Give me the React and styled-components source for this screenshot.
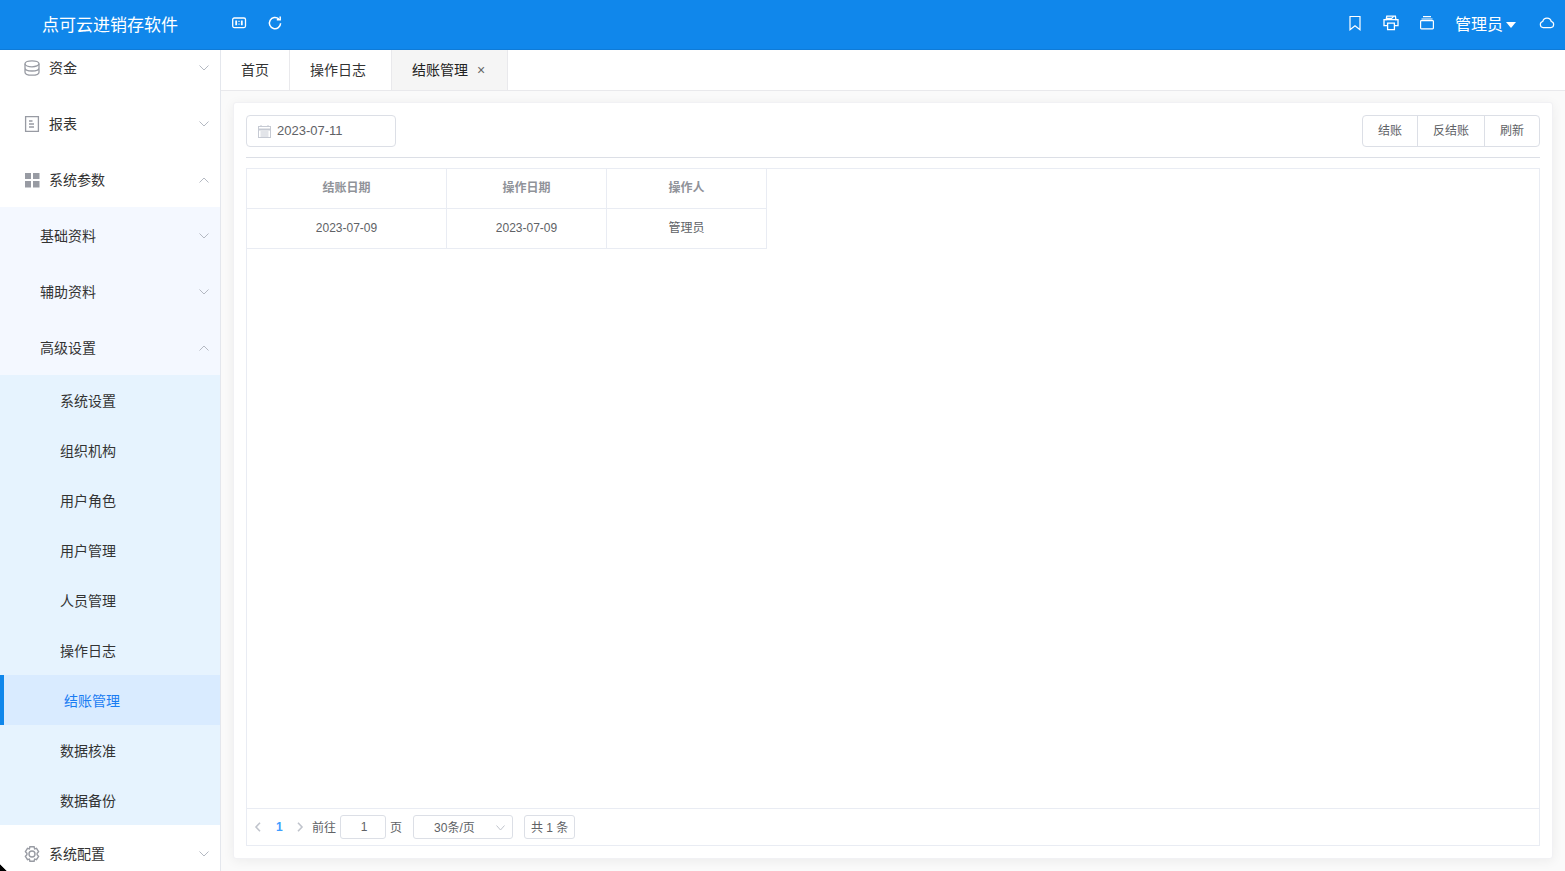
import React from 'react';
import styled, { createGlobalStyle } from 'styled-components';

const Global = createGlobalStyle`
  html, body { margin: 0; padding: 0; height: 100%; overflow: hidden; background: #fff; }
  body { font-family: "Liberation Sans", "Noto Sans CJK SC", sans-serif; color: #333; }
  #root { height: 100%; }
  * { box-sizing: border-box; }
`;

const Page = styled.div`
  width: 1565px; height: 871px; display: flex; flex-direction: column; overflow: hidden; position: relative;
`;
const Header = styled.header`
  height: 50px; flex: none; background: #1087eb; border-bottom: 1px solid #0e7bd8; color: #fff; display: flex; align-items: center;
`;
const Logo = styled.div`
  width: 220px; padding-left: 42px; font-size: 17px; flex: none; margin-top: -3px;
`;
const HeaderTools = styled.div`
  display: flex; align-items: center; gap: 20px; padding-left: 11px; margin-top: -3px;
`;
const HeaderRight = styled.div`
  margin-left: auto; display: flex; align-items: center; margin-top: -3px; padding-right: 10px;
`;
const HeadIcon = styled.span`
  display: flex; width: 16px; height: 16px; margin-right: ${p => p.$gap ?? 20}px;
`;
const UserName = styled.span`
  font-size: 16px; line-height: 20px; margin: 3px 3px 0 0;
`;
const Caret = styled.span`
  width: 0; height: 0; border-left: 5px solid transparent; border-right: 5px solid transparent; border-top: 6px solid #fff; margin-right: 23px; margin-top: 3px;
`;
const Body = styled.div`
  flex: 1; display: flex; min-height: 0;
`;
const Side = styled.aside`
  width: 221px; flex: none; border-right: 1px solid #e4e7ed; overflow: hidden; background: #fff;
`;
const Menu = styled.div`
  margin-top: -11px;
`;
const Row = styled.div`
  height: 56px; display: flex; align-items: center; font-size: 14px; color: #333; position: relative;
  padding-left: ${p => p.$pad}px; background: ${p => p.$bg || 'transparent'};
`;
const SubRow = styled.div`
  height: 50px; display: flex; align-items: center; font-size: 14px;
  padding-left: 60px;
  background: ${p => (p.$active ? '#d9ebff' : '#e6f3fe')};
  color: ${p => (p.$active ? '#1a7cf2' : '#333')};
  border-left: ${p => (p.$active ? '4px solid #1087eb' : 'none')};
`;
const RowIcon = styled.span`
  display: flex; width: 16px; height: 16px; margin: 1px 9px 0 0; color: #989ba3;
`;
const Chevron = styled.svg`
  position: absolute; right: 11px; top: 50%; margin-top: -2px; width: 10px; height: 6px; fill: none; stroke: #b4b9c2; stroke-width: 1;
`;
const Main = styled.main`
  flex: 1; min-width: 0; display: flex; flex-direction: column; background: #fafafa;
`;
const Tabs = styled.div`
  height: 41px; flex: none; background: #fff; display: flex; border-bottom: 1px solid #e9e9ec;
`;
const Tab = styled.div`
  height: 40px; display: flex; align-items: center; font-size: 14px; color: ${p => (p.$active ? '#222' : '#333')};
  padding: 0 ${p => p.$pr ?? 20}px 2px 20px; border-right: 1px solid #e9e9ec; background: ${p => (p.$active ? '#f5f5f5' : '#fff')};
`;
const Close = styled.span`
  font-size: 14px; color: #666; margin-left: 9px; line-height: 1; margin-top: 1px;
`;
const Card = styled.section`
  margin: 11px 12px 12px 12px; flex: 1; min-height: 0; background: #fff; border-radius: 3px; border: 1px solid #f1f1f4;
  box-shadow: 0 2px 12px rgba(0,0,0,.06); padding: 12px; display: flex; flex-direction: column;
`;
const Toolbar = styled.div`
  height: 43px; flex: none; display: flex; justify-content: space-between; align-items: flex-start; border-bottom: 1px solid #dcdfe6;
`;
const DateInput = styled.div`
  width: 150px; height: 32px; border: 1px solid #dcdfe6; border-radius: 4px; display: flex; align-items: center; padding-left: 11px; font-size: 13px; color: #606266;
`;
const DateText = styled.span`
  margin-left: 6px; font-size: 13px; padding-bottom: 2px;
`;
const BtnGroup = styled.div`
  display: flex; height: 32px; border: 1px solid #dcdfe6; border-radius: 4px;
`;
const Btn = styled.div`
  padding: 0 15px 3px; display: flex; align-items: center; font-size: 12px; color: #606266;
  & + & { border-left: 1px solid #dcdfe6; }
`;
const GridBox = styled.div`
  flex: 1; min-height: 0; margin-top: 10px; border: 1px solid #e9ecf3; display: flex; flex-direction: column;
`;
const TableArea = styled.div`
  flex: 1; min-height: 0;
`;
const TRow = styled.div`
  display: flex; height: 40px; width: 520px; border-bottom: 1px solid #e9ecf3;
`;
const Cell = styled.div`
  width: ${p => p.$w}px; display: flex; align-items: center; justify-content: center; font-size: 12px;
  padding-bottom: ${p => p.$pb}px;
  color: ${p => (p.$head ? '#909399' : '#606266')}; font-weight: ${p => (p.$head ? 700 : 400)};
  border-right: 1px solid #e9ecf3;
`;
const Pager = styled.div`
  height: 37px; flex: none; border-top: 1px solid #e9ecf3; display: flex; align-items: center; font-size: 12px; color: #606266;
`;
const PageArrow = styled.svg`
  width: 8px; height: 10px; fill: none; stroke: #c0c4cc; stroke-width: 1.6; margin-left: ${p => p.$ml}px;
`;
const PageNum = styled.span`
  color: #409eff; font-weight: 700; margin-left: 14px; width: 7px;
`;
const PageLabel = styled.span`
  margin-left: ${p => p.$ml}px; padding-bottom: 2px;
`;
const PageInput = styled.div`
  width: 46px; height: 24px; border: 1px solid #dcdfe6; border-radius: 3px; margin-left: 4px; display: flex; align-items: center; justify-content: center; padding-left: 2px;
`;
const PageSelect = styled.div`
  width: 100px; height: 24px; border: 1px solid #dcdfe6; border-radius: 3px; margin-left: 11px; display: flex; align-items: center; padding: 0 0 2px 20px; position: relative;
`;
const SelectChevron = styled.svg`
  position: absolute; right: 7px; top: 9px; width: 9px; height: 6px; fill: none; stroke: #c0c4cc; stroke-width: 1;
`;
const Total = styled.div`
  height: 24px; border: 1px solid #dcdfe6; border-radius: 3px; margin-left: 11px; padding: 0 5px 2px 6px; width: 51px; display: flex; align-items: center; white-space: nowrap;
`;
const Pointer = styled.svg`
  position: absolute; left: 0; bottom: 0; width: 9px; height: 8px;
`;

const Down = () => <Chevron viewBox="0 0 10 6"><path d="M.5.5 5 5 9.5.5" /></Chevron>;
const Up = () => <Chevron viewBox="0 0 10 6"><path d="M.5 5.5 5 1l4.5 4.5" /></Chevron>;

const stroke = { fill: 'none', stroke: 'currentColor', strokeWidth: 1.3 };

const DbIcon = () => <svg width="16" height="16" viewBox="0 0 16 16" {...stroke}><ellipse cx="8" cy="3.8" rx="7" ry="3" /><path d="M1 3.8v8.4c0 1.7 3.1 3 7 3s7-1.3 7-3V3.8M1 8c0 1.7 3.1 3 7 3s7-1.3 7-3" /></svg>;
const ReportIcon = () => <svg width="16" height="16" viewBox="0 0 16 16" {...stroke}><rect x="1.6" y=".6" width="12.8" height="14.8" /><path d="M5 5h3.5M5 8h5M5 11h5" /></svg>;
const GridIcon = () => <svg width="16" height="16" viewBox="0 0 16 16" fill="currentColor"><rect x="1" y="1" width="6" height="6" /><rect x="9" y="1" width="6.5" height="6" /><rect x="1" y="9" width="6" height="6.5" /><rect x="9" y="9" width="6.5" height="6.5" /></svg>;
const GearIcon = () => <svg width="16" height="16" viewBox="0 0 16 16" {...stroke} strokeWidth="1.4"><path d="M5.9.8h4.2l.5 2.1 1.9-.6 2.1 3.4-1.5 1.6v1.4l1.5 1.6-2.1 3.4-1.9-.6-.5 2.1H5.9l-.5-2.1-1.9.6-2.1-3.4L2.9 8.7V7.3L1.4 5.7l2.1-3.4 1.9.6z" /><circle cx="8" cy="8" r="3" /></svg>;
const CalIcon = () => <svg width="13" height="13" viewBox="0 0 13 13" fill="none" stroke="#c6cad3" strokeWidth="1" style={{ flex: 'none' }}><rect x=".5" y="1.5" width="12" height="11" /><path d="M.5 4.5h12" strokeWidth="2" /><path d="M3 0v2M10 0v2M2.5 7h8M2.5 9h8M2.5 11h8" /></svg>;

const ScreenIcon = () => <svg width="16" height="16" viewBox="0 0 16 16" fill="none" stroke="#fff" strokeWidth="1.3"><rect x="1.7" y="3" width="12.8" height="9.6" rx="1.5" /><path d="M5.2 5.4v4.8M10.8 5.4v4.8" strokeWidth="1.8" /><path d="M8 5.8v1.2M8 8.6v1.2" strokeWidth="1.2" /></svg>;
const RefreshIcon = () => <svg width="16" height="16" viewBox="0 0 16 16" fill="none" stroke="#fff" strokeWidth="1.5"><path d="M13.6 8.2a5.6 5.6 0 1 1-1.8-4.3" /><path d="M13.2 1.4v3.4H9.8" /></svg>;
const BookmarkIcon = () => <svg width="16" height="16" viewBox="0 0 16 16" fill="none" stroke="#fff" strokeWidth="1.2"><path d="M3 1.5h10v13.2L8 10.8l-5 3.9z" /></svg>;
const PrinterIcon = () => <svg width="16" height="16" viewBox="0 0 16 16" fill="none" stroke="#fff" strokeWidth="1.3"><path d="M3 5.5 3.8 1.2h8.6l.6 4.3M4.6 10.6H1V4.6h14v6h-3.6" /><path d="M4.6 8.2h6.8v6.4H4.6z" /><path d="M3.6 3.4h5l2-2" /></svg>;
const StackIcon = () => <svg width="16" height="16" viewBox="0 0 16 16" fill="none" stroke="#fff" strokeWidth="1.2"><path d="M4 1.6h8M2.5 4h11" /><rect x="1.6" y="5.6" width="12.8" height="8.3" rx=".8" /></svg>;
const CloudIcon = () => <svg width="16" height="16" viewBox="0 0 16 16" fill="none" stroke="#fff" strokeWidth="1.2"><path d="M4.2 12.6a3.1 3.1 0 0 1-.5-6.1 4.4 4.4 0 0 1 8.6 0 3.1 3.1 0 0 1-.5 6.1z" /></svg>;

const subItems = ['系统设置', '组织机构', '用户角色', '用户管理', '人员管理', '操作日志', '结账管理', '数据核准', '数据备份'];

export default function App() {
  return (
    <Page>
      <Global />
      <Header>
        <Logo>点可云进销存软件</Logo>
        <HeaderTools>
          <HeadIcon $gap={0}><ScreenIcon /></HeadIcon>
          <HeadIcon $gap={0}><RefreshIcon /></HeadIcon>
        </HeaderTools>
        <HeaderRight>
          <HeadIcon><BookmarkIcon /></HeadIcon>
          <HeadIcon><PrinterIcon /></HeadIcon>
          <HeadIcon><StackIcon /></HeadIcon>
          <UserName>管理员</UserName>
          <Caret />
          <HeadIcon $gap={0}><CloudIcon /></HeadIcon>
        </HeaderRight>
      </Header>
      <Body>
        <Side>
          <Menu>
            <Row $pad={24}><RowIcon><DbIcon /></RowIcon>资金<Down /></Row>
            <Row $pad={24}><RowIcon><ReportIcon /></RowIcon>报表<Down /></Row>
            <Row $pad={24}><RowIcon><GridIcon /></RowIcon>系统参数<Up /></Row>
            <Row $pad={40} $bg="#f4f8ff">基础资料<Down /></Row>
            <Row $pad={40} $bg="#f4f8ff">辅助资料<Down /></Row>
            <Row $pad={40} $bg="#f4f8ff">高级设置<Up /></Row>
            {subItems.map(s => <SubRow key={s} $active={s === '结账管理'}>{s}</SubRow>)}
            <Row $pad={24}><RowIcon><GearIcon /></RowIcon>系统配置<Down /></Row>
          </Menu>
        </Side>
        <Main>
          <Tabs>
            <Tab>首页</Tab>
            <Tab $pr={25}>操作日志</Tab>
            <Tab $active $pr={22}>结账管理<Close>×</Close></Tab>
          </Tabs>
          <Card>
            <Toolbar>
              <DateInput><CalIcon /><DateText>2023-07-11</DateText></DateInput>
              <BtnGroup><Btn>结账</Btn><Btn>反结账</Btn><Btn>刷新</Btn></BtnGroup>
            </Toolbar>
            <GridBox>
              <TableArea>
                <TRow><Cell $head $pb={4} $w={200}>结账日期</Cell><Cell $head $pb={4} $w={160}>操作日期</Cell><Cell $head $pb={4} $w={160}>操作人</Cell></TRow>
                <TRow><Cell $pb={2} $w={200}>2023-07-09</Cell><Cell $pb={2} $w={160}>2023-07-09</Cell><Cell $pb={5} $w={160}>管理员</Cell></TRow>
              </TableArea>
              <Pager>
                <PageArrow $ml={7} viewBox="0 0 8 10"><path d="M6 .8 2 5l4 4.2" /></PageArrow>
                <PageNum>1</PageNum>
                <PageArrow $ml={13} viewBox="0 0 8 10"><path d="M2 .8 6 5 2 9.2" /></PageArrow>
                <PageLabel $ml={8}>前往</PageLabel>
                <PageInput>1</PageInput>
                <PageLabel $ml={4}>页</PageLabel>
                <PageSelect>30条/页<SelectChevron viewBox="0 0 9 6"><path d="M.5.5 4.5 5 8.5.5" /></SelectChevron></PageSelect>
                <Total>共 1 条</Total>
              </Pager>
            </GridBox>
          </Card>
        </Main>
      </Body>
      <Pointer viewBox="0 0 9 8"><path d="M-1 0 8 9H-1z" fill="#000" stroke="#fff" strokeWidth=".6" /></Pointer>
    </Page>
  );
}
